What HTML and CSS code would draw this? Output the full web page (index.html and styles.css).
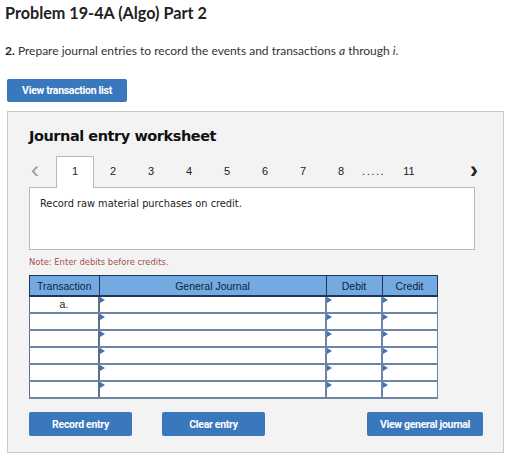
FILE: index.html
```html
<!DOCTYPE html>
<html>
<head>
<meta charset="utf-8">
<link rel="stylesheet" href="styles.css">
</head>
<body>
<h1 class="title">Problem 19-4A (Algo) Part 2</h1>
<p class="prompt"><b>2.</b> Prepare journal entries to record the events and transactions <i>a</i> through <i>i</i>.</p>
<button class="btn btn-list">View transaction list</button>
<div class="panel">
  <h2 class="ws-title">Journal entry worksheet</h2>
  <div class="tabs">
    <span class="arrow prev">&lsaquo;</span>
    <span class="tab active">1</span>
    <span class="tab">2</span>
    <span class="tab">3</span>
    <span class="tab">4</span>
    <span class="tab">5</span>
    <span class="tab">6</span>
    <span class="tab">7</span>
    <span class="tab">8</span>
    <span class="dots">.....</span>
    <span class="tab last">11</span>
    <span class="arrow next">&rsaquo;</span>
  </div>
  <div class="desc">Record raw material purchases on credit.</div>
  <div class="note">Note: Enter debits before credits.</div>
  <table class="journal">
    <thead>
      <tr><th class="c-tr">Transaction</th><th class="c-gj">General Journal</th><th class="c-db">Debit</th><th class="c-cr">Credit</th></tr>
    </thead>
    <tbody>
      <tr><td class="c-tr">a.</td><td class="in"></td><td class="in"></td><td class="in"></td></tr>
      <tr><td class="c-tr"></td><td class="in"></td><td class="in"></td><td class="in"></td></tr>
      <tr><td class="c-tr"></td><td class="in"></td><td class="in"></td><td class="in"></td></tr>
      <tr><td class="c-tr"></td><td class="in"></td><td class="in"></td><td class="in"></td></tr>
      <tr><td class="c-tr"></td><td class="in"></td><td class="in"></td><td class="in"></td></tr>
      <tr><td class="c-tr"></td><td class="in"></td><td class="in"></td><td class="in"></td></tr>
    </tbody>
  </table>
  <div class="actions">
    <button class="btn btn-rec">Record entry</button>
    <button class="btn btn-clr">Clear entry</button>
    <span class="spacer"></span>
    <button class="btn btn-view">View general journal</button>
  </div>
</div>
</body>
</html>
```
FILE: styles.css
```css
html, body { margin: 0; padding: 0; background: #fff; }
body { width: 524px; height: 462px; overflow: hidden; }

.title {
  margin: 0;
  padding: 4px 0 0 5px;
  font-family: Lato, "Open Sans", sans-serif;
  font-weight: 700;
  font-size: 16.2px;
  line-height: 18px;
  color: #222;
}
.prompt {
  margin: 22px 0 0 5px;
  font-family: Lato, "Open Sans", sans-serif;
  font-size: 12px;
  line-height: 14px;
  color: #333;
}
.prompt b { color: #222; }

.btn {
  border: 0;
  border-radius: 2px;
  background: #3a78bd;
  color: #fff;
  font-family: Roboto, sans-serif;
  font-weight: 700;
  font-size: 10.5px;
  letter-spacing: -0.3px;
  height: 24px;
  padding: 0;
  cursor: pointer;
}
.btn-list { display: block; margin: 21px 0 0 7px; width: 120px; height: 23px; }

.panel {
  margin: 9px 0 0 7px;
  width: 495px;
  height: 340px;
  background: #f3f3f3;
  border: 1px solid #c9c9c9;
  box-sizing: content-box;
  padding: 0;
}
.ws-title {
  margin: 14px 0 0 21px;
  font-family: "DejaVu Sans", Verdana, sans-serif;
  font-weight: 700;
  font-size: 14.5px;
  line-height: 20px;
  color: #111;
  letter-spacing: -0.45px;
}
.tabs {
  display: flex;
  align-items: flex-end;
  margin: 10px 0 0 21px;
  height: 31px;
  font-family: "Liberation Sans", Arial, sans-serif;
  font-size: 11px;
  color: #222;
}
.tab {
  width: 38px;
  height: 30px;
  line-height: 28px;
  text-align: center;
  box-sizing: border-box;
}
.tab.active {
  background: #fff;
  border: 1px solid #b8b8b8;
  border-bottom: 0;
  height: 32px;
  margin-bottom: -1px;
  position: relative;
  z-index: 1;
  line-height: 28px;
}
.arrow {
  width: 27px;
  height: 30px;
  line-height: 26px;
  font-size: 24px;
  text-align: left;
  padding-left: 2px;
  box-sizing: border-box;
}
.arrow.prev { color: #999; }
.arrow.next { color: #222; margin-left: auto; margin-right: 25px; width: 10px; font-weight: 700; }
.dots { width: 34px; height: 30px; line-height: 28px; letter-spacing: 1.6px; margin-left: 0; padding-left: 2px; box-sizing: border-box; }
.tab.last { width: 30px; }

.desc {
  margin: 0 0 0 21px;
  width: 446px;
  height: 63px;
  box-sizing: border-box;
  background: #fff;
  border: 1px solid #b8b8b8;
  padding: 10px 0 0 10px;
  font-family: "DejaVu Sans", Verdana, sans-serif;
  font-size: 9.8px;
  color: #222;
}
.note {
  margin: 6px 0 0 21px;
  font-family: "DejaVu Sans", Verdana, sans-serif;
  font-size: 8.4px;
  line-height: 12px;
  color: #a0524c;
}

.journal {
  margin: 7px 0 0 21px;
  border-collapse: collapse;
  font-family: "Liberation Sans", Arial, sans-serif;
  font-size: 10.5px;
  table-layout: fixed;
}
.journal th {
  height: 19px;
  padding: 0;
  background: #74aae2;
  border: 1px solid #1f3659;
  border-bottom-width: 2px;
  font-weight: 400;
  color: #0f1f38;
  text-align: center;
}
.journal .c-tr { width: 68px; }
.journal th.c-gj { width: 226px; }
.journal th.c-db { width: 55px; }
.journal th.c-cr { width: 54px; }
.journal td {
  height: 15px;
  padding: 0;
  background: #fff;
  border: 2px solid #6d85a6;
  border-top: 0;
  border-left-width: 1px;
  border-right-width: 1px;
  text-align: center;
  color: #222;
  vertical-align: top;
  line-height: 14px;
}
.journal td.c-tr { border-left: 1px solid #5f6e84; border-right: 2px solid #5f6e84; }
.journal td.in {
  border-left: 2px solid #6d85a6;
  border-right: 1px solid #6d85a6;
  position: relative;
}
.journal td.in::before {
  content: "";
  position: absolute;
  left: 0;
  top: 0;
  border-left: 5px solid #3d74b8;
  border-top: 3px solid transparent;
  border-bottom: 3px solid transparent;
}

.actions {
  display: flex;
  margin: 13px 0 0 21px;
  width: 454px;
}
.btn-rec { width: 103px; }
.btn-clr { width: 103px; margin-left: 30px; }
.spacer { flex: 1; }
.btn-view { width: 116px; }
```
